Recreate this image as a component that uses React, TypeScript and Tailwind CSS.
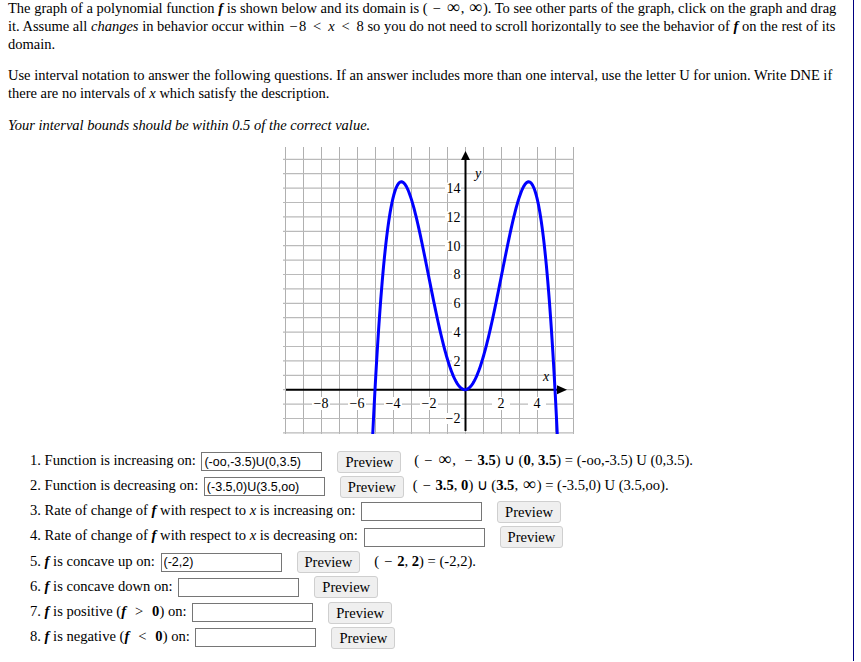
import React from "react";

const F = () => <b className="italic">f</b>;

const I = ({ c }: { c: string }) => <i>{c}</i>;

// math atoms, MathJax-ish spacing
const Minus = () => <span className="inline-block w-[12px] mx-[3px] text-center">−</span>;
const Neg = () => <span className="inline-block w-[11px] text-center">−</span>;
const Inf = () => <span className="inline-block w-[15px] text-center text-[18px] leading-[10px]">∞</span>;
const Rel = ({ c }: { c: string }) => <span className="inline-block w-[22px] text-center">{c}</span>;
const Cup = () => <span className="inline-block w-[18px] text-center">∪</span>;

function Graph() {
  const X = (x: number) => 182 + 18 * x;
  const Y = (y: number) => 243.7 - 14.4 * y;
  const f = (x: number) => 0.0924 * x * x * (25 - x * x);
  const pts: string[] = [];
  for (let x = -5.4; x <= 5.4001; x += 0.04) {
    pts.push(`${X(x).toFixed(2)},${Y(f(x)).toFixed(2)}`);
  }
  const vx = [-10, -9, -8, -7, -6, -5, -4, -3, -2, -1, 0, 1, 2, 3, 4, 5, 6];
  const hy = [-3, -2, -1, 0, 1, 2, 3, 4, 5, 6, 7, 8, 9, 10, 11, 12, 13, 14, 15, 16];
  const xl = [-8, -6, -4, -2, 2, 4];
  const yl = [14, 12, 10, 8, 6, 4, 2, -2];
  return (
    <svg width="292" height="290" viewBox="0 0 292 290" className="block">
      <defs>
        <clipPath id="gclip">
          <rect x="0" y="0" width="292" height="288" />
        </clipPath>
      </defs>
      {vx.map((v) => (
        <line key={"v" + v} x1={X(v) + 0.5} x2={X(v) + 0.5} y1={1} y2={288} stroke="#b0b0b0" strokeWidth="1" />
      ))}
      {hy.map((v) => (
        <line key={"h" + v} x1={0} x2={291} y1={Y(v)} y2={Y(v)} stroke="#bababa" strokeWidth="1.2" />
      ))}
      {xl.map((v) => (
        <g key={"xl" + v}>
          <rect x={X(v) - 9} y={251} width={18} height={13} fill="white" />
          <text x={X(v)} y={262} fontSize="14" textAnchor="middle" fontFamily="'Liberation Serif', serif">
            {v < 0 ? "\u2212" + Math.abs(v) : v}
          </text>
        </g>
      ))}
      {yl.map((v) => (
        <g key={"yl" + v}>
          <rect x={v < 0 || v > 9 ? 162 : 169} y={Y(v) - 5.5} width={v < 0 || v > 9 ? 16 : 9} height={11} fill="white" />
          <text x={177.5} y={Y(v) + 4.8} fontSize="14" textAnchor="end" fontFamily="'Liberation Serif', serif">
            {v < 0 ? "\u2212" + Math.abs(v) : v}
          </text>
        </g>
      ))}
      <line x1={3} x2={276} y1={Y(0)} y2={Y(0)} stroke="black" strokeWidth="2" />
      <polygon points={`${274},${Y(0) - 4.5} ${284},${Y(0)} ${274},${Y(0) + 4.5}`} fill="black" />
      <line x1={X(0) + 0.5} x2={X(0) + 0.5} y1={285} y2={12} stroke="black" strokeWidth="2" />
      <polygon points={`${X(0) - 4},${14} ${X(0) + 0.5},${5} ${X(0) + 5},${14}`} fill="black" />
      <text x={192} y={32} fontSize="14" fontStyle="italic" fontFamily="'Liberation Serif', serif">y</text>
      <text x={260} y={235} fontSize="14" fontStyle="italic" fontFamily="'Liberation Serif', serif">x</text>
      <polyline points={pts.join(" ")} fill="none" stroke="#0000ff" strokeWidth="3" clipPath="url(#gclip)" strokeLinejoin="round" />
    </svg>
  );
}

function Field({ value = "" }: { value?: string }) {
  return (
    <input
      readOnly
      value={value}
      className="ml-[2px] align-middle w-[121px] h-[19px] border border-[#767676] px-[2px] text-[12.5px] leading-[17px] text-black font-['Liberation_Sans',Arial,sans-serif] bg-white"
    />
  );
}

function PreviewBtn() {
  return (
    <button className="ml-[15px] align-middle h-[22px] px-[7px] bg-[#efefef] border border-[#cfcfcf] rounded-[3px] text-[14.6px] leading-[20px] text-black">
      Preview
    </button>
  );
}

function Row({ children }: { children: React.ReactNode }) {
  return <div className="h-[25.15px] leading-[25px] whitespace-nowrap">{children}</div>;
}

export default function App() {
  return (
    <div className="w-[854px] min-h-screen border-r border-[#000080] bg-white text-black font-['Liberation_Serif','Times_New_Roman',serif] text-[14.5px] leading-[18px]">
      <div className="pl-[8px] pr-[8px] -mt-[1px]">
        <p>
          The graph of a polynomial function <F /> is shown below and its domain is (<Minus /><Inf />, <Inf />). To see other parts of the graph, click on the graph and drag it. Assume all <i>changes</i> in behavior occur within <Neg />8<Rel c="<" /><I c="x" /><Rel c="<" />8 so you do not need to scroll horizontally to see the behavior of <F /> on the rest of its domain.
        </p>
        <p className="mt-[13px]">
          Use interval notation to answer the following questions. If an answer includes more than one interval, use the letter U for union. Write DNE if there are no intervals of <I c="x" /> which satisfy the description.
        </p>
        <p className="mt-[14px] italic">Your interval bounds should be within 0.5 of the correct value.</p>
        <div className="mt-[12px] ml-[275px]">
          <Graph />
        </div>
        <div className="mt-[12px] pl-[22px] text-[14.6px]">
          <Row>
            1. Function is increasing on: <Field value="(-oo,-3.5)U(0,3.5)" />
            <PreviewBtn />
            <span className="ml-[13px]">
              (<Minus /><Inf />, <Minus /><b>3.5</b>)<Cup />(<b>0</b>, <b>3.5</b>) = (-oo,-3.5) U (0,3.5).
            </span>
          </Row>
          <Row>
            2. Function is decreasing on: <Field value="(-3.5,0)U(3.5,oo)" />
            <PreviewBtn />
            <span className="ml-[9px]">
              (<Minus /><b>3.5</b>, <b>0</b>)<Cup />(<b>3.5</b>, <Inf />) = (-3.5,0) U (3.5,oo).
            </span>
          </Row>
          <Row>
            3. Rate of change of <F /> with respect to <I c="x" /> is increasing on: <Field />
            <PreviewBtn />
          </Row>
          <Row>
            4. Rate of change of <F /> with respect to <I c="x" /> is decreasing on: <Field />
            <PreviewBtn />
          </Row>
          <Row>
            5. <F /> is concave up on: <Field value="(-2,2)" />
            <PreviewBtn />
            <span className="ml-[14px]">
              (<Minus /><b>2</b>, <b>2</b>) = (-2,2).
            </span>
          </Row>
          <Row>
            6. <F /> is concave down on: <Field />
            <PreviewBtn />
          </Row>
          <Row>
            7. <F /> is positive (<F /><span className="inline-block w-[26px] text-center">&gt;</span><b>0</b>) on: <Field />
            <PreviewBtn />
          </Row>
          <Row>
            8. <F /> is negative (<F /><span className="inline-block w-[26px] text-center">&lt;</span><b>0</b>) on: <Field />
            <PreviewBtn />
          </Row>
        </div>
      </div>
    </div>
  );
}
